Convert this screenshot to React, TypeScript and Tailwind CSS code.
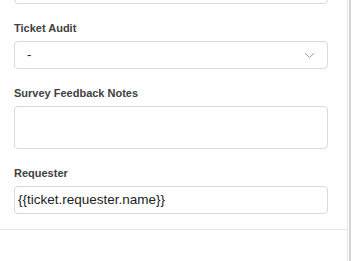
function Field({ label, children }: { label: string; children: React.ReactNode }) {
  return (
    <div className="mt-4 flex flex-col">
      <label className="h-4 text-[11px] leading-4 font-bold text-[#404040]">{label}</label>
      <div className="mt-[5px]">{children}</div>
    </div>
  );
}

export default function App() {
  return (
    <div
      className="flex h-[261px] w-[352px] overflow-hidden bg-white"
      style={{ fontFamily: '"Liberation Sans", Arial, sans-serif' }}
    >
      <div className="flex w-[348px] flex-col border-r border-[#e6e6e6]">
        <div className="flex flex-col border-b border-[#e6e6e6] pl-[14px] pr-[19px] pb-[15px]">
          <div className="-mt-[24px] h-[28px] w-full rounded border border-[#d9d9d9]" />

          <Field label="Ticket Audit">
            <div className="flex h-[28px] w-full items-center justify-between rounded border border-[#d9d9d9] pl-3 pr-[12px]">
              <span className="text-[13px] text-[#222]">-</span>
              <svg width="11" height="7" viewBox="0 0 11 7" fill="none">
                <path d="M1 1.2 L5.5 5.5 L10 1.2" stroke="#9a9a9a" strokeWidth="1" />
              </svg>
            </div>
          </Field>

          <Field label="Survey Feedback Notes">
            <div className="h-[43px] w-full rounded border border-[#d9d9d9]" />
          </Field>

          <Field label="Requester">
            <div className="flex h-[28px] w-full items-center rounded border border-[#d9d9d9] pl-[3px]">
              <span className="text-[13.5px] text-[#222]">{"{{ticket.requester.name}}"}</span>
            </div>
          </Field>
        </div>
        <div className="flex-1" />
      </div>
      <div className="ml-px h-full w-[2px] bg-[#d4d4d4]" />
    </div>
  );
}
